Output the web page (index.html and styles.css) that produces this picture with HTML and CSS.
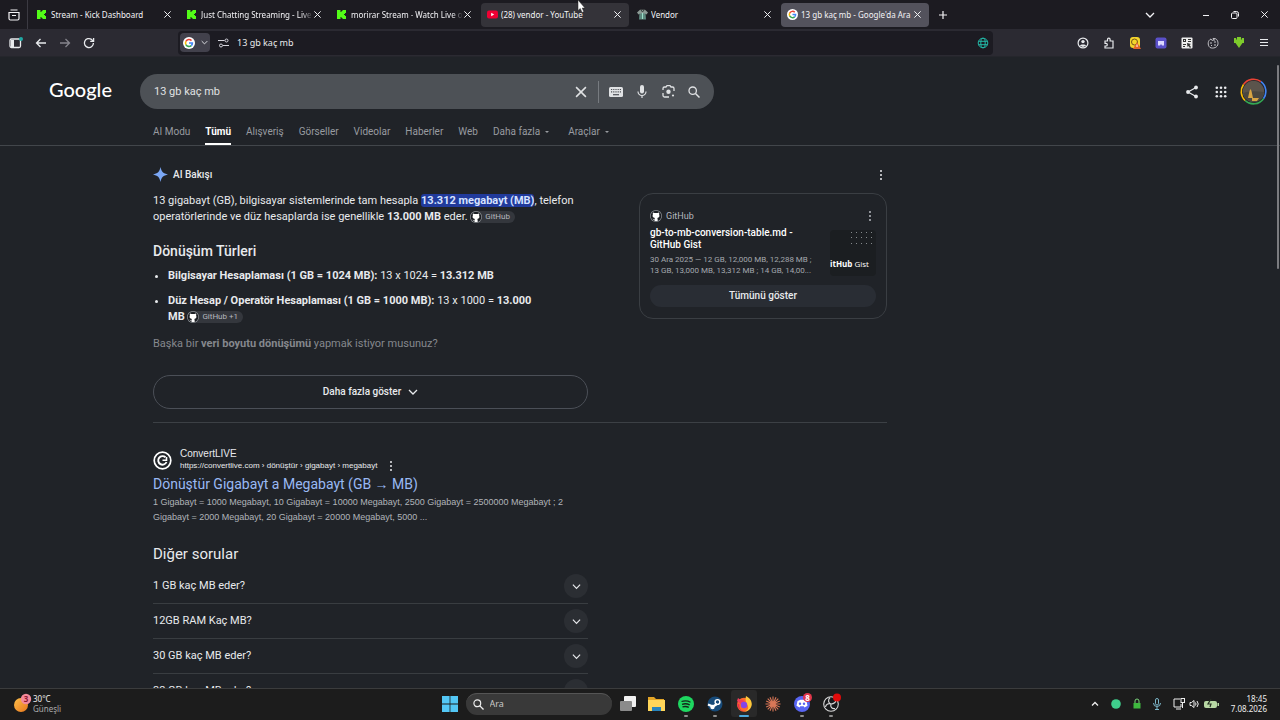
FILE: index.html
```html
<!DOCTYPE html>
<html lang="tr">
<head>
<meta charset="utf-8">
<title>13 gb kaç mb - Google'da Ara</title>
<link rel="stylesheet" href="styles.css">
</head>
<body>
<svg class="defs" aria-hidden="true">
  <symbol id="x" viewBox="0 0 10 10"><path d="M1.5 1.5l7 7M8.5 1.5l-7 7" fill="none" stroke="currentColor" stroke-width="1.1"/></symbol>
  <symbol id="chev" viewBox="0 0 10 10"><path d="M1 3l4 4 4-4" fill="none" stroke="currentColor" stroke-width="1.3"/></symbol>
  <symbol id="dots" viewBox="0 0 4 12"><circle cx="2" cy="2" r="1"/><circle cx="2" cy="6" r="1"/><circle cx="2" cy="10" r="1"/></symbol>
  <symbol id="kick" viewBox="0 0 9 9"><path fill="#53fc18" d="M0 0h3.500v2h1V1h1V0H9v3H8v1H7v1h1v1h1v3H5.500V8h-1V7h-1v2H0z"/></symbol>
  <symbol id="goog" viewBox="0 0 12 12"><circle cx="6" cy="6" r="6" fill="#fff"/><g fill="none" stroke-width="1.6"><path stroke="#ea4335" d="M8.5 3.6A3.5 3.5 0 0 0 2.9 4.4"/><path stroke="#fbbc05" d="M2.9 4.4a3.5 3.5 0 0 0 0 3.2"/><path stroke="#34a853" d="M2.9 7.6a3.5 3.5 0 0 0 5.4 1"/><path stroke="#4285f4" d="M8.3 8.6A3.4 3.4 0 0 0 9.4 6H6"/></g></symbol>
  <symbol id="gh" viewBox="0 0 12 12"><circle cx="6" cy="6" r="6" fill="#8d9196"/><circle cx="6" cy="6" r="5.300" fill="#1c1f24"/><path fill="#fff" d="M3 2.400l1.500.7a6 6 0 0 1 3 0L9 2.400c.4 1 .3 1.500.1 1.800C10 6.600 9 7.700 7.300 7.900c.4.5.4 1.200.4 3.100H4.500V9.800C3.300 10 3 9.200 2.500 8.800c.8 0 1 .8 2 .7 0-.8.1-1.200.4-1.600C3 7.700 2 6.600 2.900 4.200 2.700 3.600 2.700 3 3 2.400z"/></symbol>
  <symbol id="search" viewBox="0 0 12 12"><circle cx="4.700" cy="4.700" r="3.700" fill="none" stroke="currentColor" stroke-width="1.300"/><path d="M7.500 7.500l4 4" stroke="currentColor" stroke-width="1.500"/></symbol>
</svg>

<header class="tabs">
  <button class="view" aria-label="Sekme görünümü"><svg width="12" height="12" viewBox="0 0 12 12" fill="none" stroke="currentColor" stroke-width="1.2"><path d="M2.500 1h7M1 3.500h10v6a1.500 1.500 0 0 1-1.500 1.500h-7A1.500 1.500 0 0 1 1 9.500zM4 6.500h4"/></svg></button>
  <div class="tab"><svg class="fav"><use href="#kick"/></svg><span class="title">Stream - Kick Dashboard</span><button class="close" aria-label="Kapat"><svg><use href="#x"/></svg></button></div>
  <div class="tab"><svg class="fav"><use href="#kick"/></svg><span class="title fade">Just Chatting Streaming - Live S</span><button class="close" aria-label="Kapat"><svg><use href="#x"/></svg></button></div>
  <div class="tab"><svg class="fav"><use href="#kick"/></svg><span class="title fade">morirar Stream - Watch Live on</span><button class="close" aria-label="Kapat"><svg><use href="#x"/></svg></button></div>
  <div class="tab hover"><svg class="fav big" viewBox="0 0 11 11"><rect y="1.500" width="11" height="8" rx="2" fill="#f00033"/><path d="M4.200 3.700v3.600l3-1.800z" fill="#fff"/></svg><span class="title">(28) vendor - YouTube</span><button class="close" aria-label="Kapat"><svg><use href="#x"/></svg></button></div>
  <div class="tab"><svg class="fav big" viewBox="0 0 11 11"><path fill="#5d8a7f" d="M2.500 3h6l.5 7.500H2z"/><path fill="#8c9a95" d="M3 .8h5l3 2.700-1.500 2L8 4.500H3l-1.500 1L0 3.500z"/><path d="M4 1l1.500 2L7 1" fill="none" stroke="#33403c"/><path d="M5.500 4v6" stroke="#9bdfca"/></svg><span class="title">Vendor</span><button class="close" aria-label="Kapat"><svg><use href="#x"/></svg></button></div>
  <div class="tab active"><svg class="fav big"><use href="#goog"/></svg><span class="title">13 gb kaç mb - Google'da Ara</span><button class="close" aria-label="Kapat"><svg><use href="#x"/></svg></button></div>
  <button class="plus" aria-label="Yeni sekme"><svg width="10" height="10" viewBox="0 0 10 10" stroke="currentColor" stroke-width="1.200"><path d="M5 1v8M1 5h8"/></svg></button>
  <div class="win">
    <button aria-label="Sekmeler"><svg width="10" height="10"><use href="#chev"/></svg></button>
    <button class="min" aria-label="Küçült"><svg width="8" height="8" viewBox="0 0 8 8" stroke="currentColor"><path d="M1 4.500h6"/></svg></button>
    <button aria-label="Geri yükle"><svg width="8" height="8" viewBox="0 0 8 8" fill="none" stroke="currentColor"><rect x=".5" y="2" width="5.500" height="5.500" rx="1"/><path d="M2.500.5h3a2 2 0 0 1 2 2v3"/></svg></button>
    <button aria-label="Kapat"><svg width="9" height="9"><use href="#x"/></svg></button>
  </div>
</header>

<div class="toolbar">
  <div class="navbtns">
    <button aria-label="Kenar çubuğu"><svg width="14" height="12" viewBox="0 0 14 12"><rect x="1" y="2" width="10.500" height="8.500" rx="1.500" fill="none" stroke="currentColor" stroke-width="1.300"/><path d="M2 3h3v7H2z" fill="currentColor"/><circle cx="12" cy="2" r="2" fill="#1fa9a5"/></svg></button>
    <button aria-label="Geri"><svg width="12" height="12" viewBox="0 0 12 12" fill="none" stroke="currentColor" stroke-width="1.300"><path d="M11 6H1.500M5.500 2l-4 4 4 4"/></svg></button>
    <button class="dim" aria-label="İleri"><svg width="12" height="12" viewBox="0 0 12 12" fill="none" stroke="currentColor" stroke-width="1.300"><path d="M1 6h9.500M6.500 2l4 4-4 4"/></svg></button>
    <button aria-label="Yenile"><svg width="12" height="12" viewBox="0 0 12 12" fill="none" stroke="currentColor" stroke-width="1.300"><path d="M10.400 6A4.500 4.500 0 1 1 8.500 2.400L10 4M10.600 1v3.400H7.200"/></svg></button>
  </div>
  <div class="url">
    <button class="engine" aria-label="Arama motoru"><svg width="12" height="12"><use href="#goog"/></svg><svg width="7" height="7"><use href="#chev"/></svg></button>
    <svg width="11" height="10" viewBox="0 0 11 10" fill="none" stroke="#d5d4dc"><path d="M0 2.500h6.500M5 7.500H11"/><circle cx="8.500" cy="2.500" r="1.500"/><circle cx="3" cy="7.500" r="1.500"/></svg>
    <input type="text" value="13 gb kaç mb" aria-label="Adres">
    <svg width="12" height="12" viewBox="0 0 12 12" fill="none" stroke="#23b9a8"><circle cx="6" cy="6" r="4.800"/><ellipse cx="6" cy="6" rx="2.200" ry="4.800"/><path d="M1.500 4.300h9M1.500 7.700h9"/></svg>
  </div>
  <div class="exts">
    <button aria-label="Hesap"><svg width="12" height="12" viewBox="0 0 12 12"><circle cx="6" cy="6" r="4.900" fill="none" stroke="currentColor" stroke-width="1.200"/><circle cx="6" cy="4.600" r="1.700" fill="currentColor"/><path d="M3 8.800C3 7 9 7 9 8.800L6 10z" fill="currentColor"/></svg></button>
    <button aria-label="Uzantılar"><svg width="12" height="12" viewBox="0 0 12 12" fill="none" stroke="currentColor" stroke-width="1.200"><path d="M2 4h2.500V2.500a1.300 1.300 0 0 1 2.600 0V4H10v7H2V9h1a1.300 1.300 0 0 0 0-2.600H2z"/></svg></button>
    <button aria-label="Uzantı 1"><svg width="12" height="12" viewBox="0 0 12 12"><rect x="1" width="10" height="11" rx="3" fill="#f4d52c"/><circle cx="5.500" cy="5" r="3" fill="none" stroke="#72541c"/><path d="M8 5l4 7H4z" fill="#e3642a"/><path d="M8 7.500v2.500" stroke="#fff"/></svg></button>
    <button aria-label="Uzantı 2"><svg width="12" height="12" viewBox="0 0 12 12"><rect x=".5" y=".5" width="11" height="11" rx="2" fill="#5a50c8"/><path d="M3 4h6v4.500H7L6 7 5 8.500H3z" fill="#dcd9ff"/></svg></button>
    <button aria-label="Uzantı 3"><svg width="12" height="12" viewBox="0 0 12 12"><rect x=".5" y=".5" width="11" height="11" rx="1" fill="#eee"/><path d="M2 2h3v3H2zM7 2h3v1H7zM7 4h3v1H7zM2 7h3v1H2zM2 9h2v1H2zM6 6l4 1-1.500 1L10 10 9 11 7.500 9 6.500 10z" fill="#333"/><path d="M3 3h1v1H3z" fill="#eee"/></svg></button>
    <button aria-label="Uzantı 4"><svg width="12" height="12" viewBox="0 0 12 12" fill="none" stroke="#c4c3c8"><path d="M4 2C1 3 0 8 3 10.500c3 1.500 8 0 8-4C11 3 9 1 6 1.500c1 1 0 2-1 2z"/><path d="M3 6h2M7 5h2M4 8.500h1M7 8h2M6 3h2"/></svg></button>
    <button aria-label="İndir"><svg width="12" height="12" viewBox="0 0 12 12" fill="#7ecb2c"><path d="M1 1h2.200v1.500H4V0h4v2.500h.8V1H11v5H9.500L6 11 2.500 6H1z"/></svg></button>
    <button aria-label="Menü"><svg width="10" height="10" viewBox="0 0 10 10" stroke="currentColor"><path d="M1 1.500h8M1 4.500h8M1 7.500h8"/></svg></button>
  </div>
</div>

<main class="page">
  <div class="top">
    <a class="logo" href="#">Google</a>
    <form class="box">
      <input type="text" value="13 gb kaç mb" aria-label="Ara">
      <button type="button" aria-label="Temizle"><svg width="14" height="14"><use href="#x"/></svg></button>
      <span class="sep"></span>
      <button type="button" aria-label="Klavye"><svg width="14" height="12" viewBox="0 0 14 12"><rect y="1" width="14" height="10" rx="1.500" fill="currentColor"/><path d="M2 3.500h10M2 5.800h10" stroke="#4d5156" stroke-width="1.200" stroke-dasharray="1.200 1"/><path d="M4 8.700h6" stroke="#4d5156" stroke-width="1.200"/></svg></button>
      <button type="button" aria-label="Sesle ara"><svg width="10" height="14" viewBox="0 0 10 14"><rect x="3" y="0" width="4" height="8.500" rx="2" fill="currentColor"/><path d="M1 6.500a4 4 0 0 0 8 0M5 10.500V13" fill="none" stroke="currentColor" stroke-width="1.200"/></svg></button>
      <button type="button" aria-label="Görselle ara"><svg width="13" height="13" viewBox="0 0 13 13"><path d="M1 5V3.500A1.500 1.500 0 0 1 2.500 2H4l1-1.300h3L9 2h1.500A1.500 1.500 0 0 1 12 3.500V6M1 8v2.500A1.500 1.500 0 0 0 2.500 12H7" fill="none" stroke="currentColor" stroke-width="1.300"/><circle cx="6.500" cy="6.800" r="2.200" fill="currentColor"/><circle cx="11" cy="10.500" r="1.100" fill="currentColor"/></svg></button>
      <button type="submit" aria-label="Ara"><svg width="12" height="12"><use href="#search"/></svg></button>
    </form>
    <div class="account">
      <button aria-label="Paylaş"><svg width="12" height="14" viewBox="0 0 12 14" fill="currentColor"><path d="M10 2.500L2 7l8 4.500" fill="none" stroke="currentColor" stroke-width="1.200"/><circle cx="10" cy="2.500" r="1.900"/><circle cx="2" cy="7" r="1.900"/><circle cx="10" cy="11.500" r="1.900"/></svg></button>
      <button aria-label="Uygulamalar"><svg width="12" height="12" viewBox="0 0 12 12" fill="currentColor"><g id="r"><circle cx="1.800" cy="1.800" r="1.300"/><circle cx="6" cy="1.800" r="1.300"/><circle cx="10.200" cy="1.800" r="1.300"/></g><use href="#r" y="4.200"/><use href="#r" y="8.400"/></svg></button>
      <button aria-label="Hesabım"><svg width="27" height="27" viewBox="0 0 27 27"><g fill="none" stroke-width="1.600"><path stroke="#ea4335" d="M3.500 6.500A12.300 12.300 0 0 1 21 3.700"/><path stroke="#4285f4" d="M21 3.700a12.300 12.300 0 0 1 2.500 17"/><path stroke="#34a853" d="M23.500 20.700A12.300 12.300 0 0 1 5 22.500"/><path stroke="#fbbc05" d="M5 22.500a12.300 12.300 0 0 1-1.500-16"/></g><circle cx="13.500" cy="13.500" r="10.700" fill="#5b544c"/><path d="M3 15q7-3 21-1-1 9-10 10.200Q5 23 3 15z" fill="#4b4740"/><path d="M8 20l1.500-7 1-2 1 2 1.500 7zM12 20h7l-2 3h-5z" fill="#d8a443"/></svg></button>
    </div>
  </div>
  <nav class="filters">
    <a href="#">AI Modu</a><a href="#" class="on">Tümü</a><a href="#">Alışveriş</a><a href="#">Görseller</a><a href="#">Videolar</a><a href="#">Haberler</a><a href="#">Web</a><button class="more">Daha fazla <i></i></button><button class="more">Araçlar <i></i></button>
  </nav>

  <div class="results">
    <section class="overview">
      <div class="ai">
        <svg width="15" height="15" viewBox="0 0 14 14"><path fill="#7ba7f5" d="M7 0c.8 4.300 2.700 6.200 7 7-4.300.8-6.200 2.700-7 7-.8-4.300-2.700-6.200-7-7 4.300-.8 6.200-2.700 7-7z"/></svg>
        <h2>AI Bakışı</h2>
        <button aria-label="Seçenekler"><svg width="4" height="12" fill="currentColor"><use href="#dots"/></svg></button>
      </div>
      <div class="cols">
        <div class="answer">
          <p>13 gigabayt (GB), bilgisayar sistemlerinde tam hesapla <mark>13.312 megabayt (MB)</mark>, telefon<br>operatörlerinde ve düz hesaplarda ise genellikle <b>13.000 MB</b> eder. <a class="chip" href="#"><svg width="12" height="12"><use href="#gh"/></svg>GitHub</a></p>
          <h3>Dönüşüm Türleri</h3>
          <ul>
            <li><b>Bilgisayar Hesaplaması (1 GB = 1024 MB):</b> 13 x 1024 = <b>13.312 MB</b></li>
            <li><b>Düz Hesap / Operatör Hesaplaması (1 GB = 1000 MB):</b> 13 x 1000 = <b>13.000<br>MB</b> <a class="chip" href="#"><svg width="12" height="12"><use href="#gh"/></svg>GitHub +1</a></li>
          </ul>
          <p class="ask">Başka bir <b>veri boyutu dönüşümü</b> yapmak istiyor musunuz?</p>
          <button class="showmore">Daha fazla göster <svg width="10" height="10"><use href="#chev"/></svg></button>
        </div>
        <aside class="card">
          <div class="src"><svg width="12" height="12"><use href="#gh"/></svg><span>GitHub</span><button aria-label="Seçenekler"><svg width="4" height="12" fill="currentColor"><use href="#dots"/></svg></button></div>
          <div class="cardbody">
            <div class="cardtext">
              <h4>gb-to-mb-conversion-table.md -<br>GitHub Gist</h4>
              <p>30 Ara 2025 — 12 GB, 12,000 MB, 12,288 MB ;<br>13 GB, 13,000 MB, 13,312 MB ; 14 GB, 14,00...</p>
            </div>
            <div class="thumb"><svg width="26" height="16" viewBox="0 0 26 16" stroke="#85898c" stroke-dasharray="1 4"><path d="M1 1.500h24M1 6.500h24M1 12.500h24"/></svg><span><b>itHub</b> Gist</span></div>
          </div>
          <button class="all">Tümünü göster</button>
        </aside>
      </div>
    </section>

    <article class="hit">
      <div class="site">
        <svg width="19" height="19" viewBox="0 0 19 19" fill="none" stroke="#fff"><circle cx="9.500" cy="9.500" r="8.300" stroke-width="1.700"/><path d="M12.500 6.300A4.300 4.300 0 1 0 13.500 11" stroke-width="1.900"/><path d="M13.500 6v3.200H9.500" stroke-width="1.600"/></svg>
        <div class="sitetext"><span class="name">ConvertLIVE</span><span class="crumb">https://convertlive.com › dönüştür › gigabayt › megabayt <button aria-label="Seçenekler"><svg width="4" height="12" fill="currentColor"><use href="#dots"/></svg></button></span></div>
      </div>
      <h3><a href="#">Dönüştür Gigabayt a Megabayt (GB → MB)</a></h3>
      <p>1 Gigabayt = 1000 Megabayt, 10 Gigabayt = 10000 Megabayt, 2500 Gigabayt = 2500000 Megabayt ; 2<br>Gigabayt = 2000 Megabayt, 20 Gigabayt = 20000 Megabayt, 5000 ...</p>
    </article>

    <section class="faq">
      <h2>Diğer sorular</h2>
      <div class="q"><span>1 GB kaç MB eder?</span><button aria-label="Genişlet"><svg width="9" height="9"><use href="#chev"/></svg></button></div>
      <div class="q"><span>12GB RAM Kaç MB?</span><button aria-label="Genişlet"><svg width="9" height="9"><use href="#chev"/></svg></button></div>
      <div class="q"><span>30 GB kaç MB eder?</span><button aria-label="Genişlet"><svg width="9" height="9"><use href="#chev"/></svg></button></div>
      <div class="q"><span>32 GB kaç MB eder?</span><button aria-label="Genişlet"><svg width="9" height="9"><use href="#chev"/></svg></button></div>
    </section>
  </div>
  <div class="scroll"></div>
</main>

<footer class="taskbar">
  <div class="weather">
    <svg width="19" height="21" viewBox="0 0 19 21"><defs><linearGradient id="sun" x1="0" y1="0" x2="1" y2="1"><stop offset="0" stop-color="#ffc04a"/><stop offset="1" stop-color="#e8761c"/></linearGradient></defs><circle cx="7" cy="12" r="7" fill="url(#sun)"/><circle cx="12" cy="6" r="5.200" fill="#f48a9a"/><text x="12" y="9" text-anchor="middle" class="badge dark">3</text></svg>
    <div><span>30°C</span><span class="sub">Güneşli</span></div>
  </div>
  <div class="apps">
    <button aria-label="Başlat"><svg width="16" height="16" viewBox="0 0 16 16"><path fill="#53c7f5" d="M0 0h7.600v7.600H0zM8.400 0H16v7.600H8.400zM0 8.400h7.600V16H0zM8.400 8.400H16V16H8.400z"/></svg></button>
    <label class="find"><svg width="11" height="11"><use href="#search"/></svg><input type="text" placeholder="Ara" aria-label="Ara"></label>
    <button aria-label="Görev görünümü"><svg width="16" height="16" viewBox="0 0 16 16"><rect x="4" y="0" width="12" height="11" rx="1" fill="#f2f2f2"/><rect x="0" y="5" width="12" height="10" rx="1" fill="#8b8b8b"/></svg></button>
    <button aria-label="Dosya Gezgini"><svg width="17" height="16" viewBox="0 0 17 16"><path fill="#e3a527" d="M0 1h6l2 2h8v6H0z"/><path fill="#ffd659" d="M0 4h17v11H0z"/><path fill="#2784bd" d="M4 15v-4h9v4z"/></svg></button>
    <button class="run" aria-label="Spotify"><svg width="16" height="16" viewBox="0 0 16 16"><circle cx="8" cy="8" r="8" fill="#1ed760"/><path d="M3.500 5.500q5-1.500 9 .8M4 8.300q4.200-1.300 7.700.6M4.500 10.900q3.500-1 6.300.5" fill="none" stroke="#15251a" stroke-width="1.300"/></svg></button>
    <button class="run" aria-label="Steam"><svg width="16" height="16" viewBox="0 0 16 16"><circle cx="8" cy="8" r="7.500" fill="#174a78"/><circle cx="10.500" cy="6" r="2.400" fill="none" stroke="#fff" stroke-width="1.400"/><path d="M1 8.500l5 2 4-2.500" fill="none" stroke="#fff" stroke-width="2.300"/><circle cx="5.500" cy="11" r="2.200" fill="#fff"/></svg></button>
    <button class="run sel" aria-label="Firefox"><svg width="16" height="16" viewBox="0 0 16 16"><circle cx="8" cy="8.700" r="7" fill="#ff6b2b"/><path d="M10 0c4 2 7 6 5.300 10.500C14 14 11 16 8 15.700c4-1 5-4 3.500-6.700C10 7 9 4 10 0z" fill="#ffc83a"/><path d="M1 5l1-3 2.500 2C7 3 8 5 9 6c-3 0-4 1-4 2.500z" fill="#f43d5a"/><circle cx="8" cy="9" r="3.200" fill="#8544e8"/><path d="M1.200 7C1 12 5 16 9 15.500c-5-1-6-4-5.500-7z" fill="#e8314d"/></svg></button>
    <button aria-label="Claude"><svg width="16" height="16" viewBox="0 0 16 16" stroke="#d97757" stroke-width="1.100"><path d="M8 .5v15M.5 8h15M2.700 2.700l10.600 10.600M13.300 2.700L2.700 13.300M5 1.200l6 13.600M11 1.200L5 14.800M1.200 5l13.600 6M14.800 5L1.200 11"/></svg></button>
    <button class="run" aria-label="Discord"><svg width="20" height="24" viewBox="-2 0 20 24"><circle cx="8" cy="12" r="8" fill="#5865f2"/><path d="M3.500 9l3-1.300h3l3 1.300 1 4.800-3 1.700-.8-1.200H6.300L5.500 15.500l-3-1.700z" fill="#fff"/><circle cx="6" cy="11.700" r="1.200" fill="#5865f2"/><circle cx="10" cy="11.700" r="1.200" fill="#5865f2"/><circle cx="13.500" cy="5.500" r="4.500" fill="#e2374b"/><text x="13.500" y="8.500" text-anchor="middle" class="badge">8</text></svg></button>
    <button class="run" aria-label="OBS"><svg width="20" height="24" viewBox="-2 0 20 24"><circle cx="8" cy="12" r="7.300" fill="#18191b" stroke="#d8d8d8" stroke-width="1.100"/><path d="M7 5.500c-3 3-1 6 1 6.500 3 0 5-2 5-4M8 12c-1 3 1 5 4 4.500M8 12c-2-1-5 0-5.500 3" fill="none" stroke="#d8d8d8" stroke-width="1.200"/><circle cx="14" cy="5.500" r="4" fill="#e00b0b"/></svg></button>
  </div>
  <div class="tray">
    <svg width="8" height="8" viewBox="0 0 8 8" fill="none" stroke="#eee" stroke-width="1.300"><path d="M1 5.500l3-3 3 3"/></svg>
    <svg width="10" height="10" viewBox="0 0 10 10"><circle cx="5" cy="5" r="4.800" fill="#3fce8c"/></svg>
    <svg width="8" height="11" viewBox="0 0 8 11"><path d="M2 5V3a2 2 0 0 1 4 0v2" fill="none" stroke="#7bd37b"/><rect x=".5" y="5" width="7" height="5.500" fill="#3fb83f"/></svg>
    <svg width="8" height="12" viewBox="0 0 8 12" fill="none" stroke="#7db7ca"><rect x="2.500" y=".5" width="3" height="6.500" rx="1.500"/><path d="M.5 5a3.500 3.500 0 0 0 7 0M4 8.500V11.500M2 11.500h4"/></svg>
    <div class="status">
      <svg width="12" height="12" viewBox="0 0 12 12" fill="none" stroke="#eee"><path d="M7 1H1v8h7V6M3 11h5M9.500 4v6"/><rect x="8" y=".5" width="3.500" height="4"/></svg>
      <svg width="11" height="10" viewBox="0 0 11 10" fill="none" stroke="#eee"><path d="M1 3.500h1.500L5 1.500v7L2.500 6.500H1zM6.500 3.500q1 1.500 0 3M8 2q2.500 3 0 6"/></svg>
      <svg width="15" height="10" viewBox="0 0 15 10"><rect y="2" width="13" height="7" rx="2" fill="#b8d8a4"/><path d="M13.500 4h1.500v3h-1.500z" fill="#b8d8a4"/><path d="M7 0L4 5h3L6 8" fill="none" stroke="#253022" stroke-width="1.200"/></svg>
    </div>
    <div class="clock"><span>18:45</span><span>7.08.2026</span></div>
  </div>
</footer>
<svg class="cursor" viewBox="0 0 9 13"><path d="M1 0v10.500l2.300-2 1.700 4 1.800-.8L5.200 8H8z" fill="#fff" stroke="#222" stroke-width=".5"/></svg>
</body>
</html>
```
FILE: styles.css
```css
* { box-sizing: border-box; }
body { margin: 0; height: 100vh; display: flex; flex-direction: column; overflow: hidden; background: #202328; color: #e8eaed; font: 11px/16px Roboto, "Liberation Sans", sans-serif; }
button { background: none; border: 0; padding: 0; margin: 0; color: inherit; font: inherit; display: inline-flex; align-items: center; justify-content: center; flex: none; }
input { background: none; border: 0; padding: 0; outline: 0; color: inherit; font: inherit; min-width: 0; flex: 1; }
a { color: inherit; text-decoration: none; }
h2, h3, h4, p, ul { margin: 0; font-weight: 400; }
svg { flex: none; display: block; }
b { font-weight: 700; }
.defs { position: absolute; width: 0; height: 0; }

.tabs { height: 29px; flex: none; display: flex; align-items: center; background: #1c1b21; font: 8px/14px "Noto Sans", sans-serif; color: #f3f3f6; }
.view { width: 28px; height: 29px; border-right: 1px solid #3b3a42; margin-right: 3px; }
.tab { width: 148px; height: 24px; margin-right: 2px; padding: 0 7px 0 6px; display: flex; align-items: center; border-radius: 4px; }
.tab.hover { background: #343339; }
.tab.active { background: #53525c; }
.fav { width: 9px; height: 9px; margin-right: 5px; }
.fav.big { width: 11px; height: 11px; margin-right: 3px; }
.title { flex: 1; min-width: 0; overflow: hidden; white-space: nowrap; }
.title.fade { mask-image: linear-gradient(to right, #000 90%, transparent); }
.close { width: 9px; }
.close svg { width: 9px; height: 9px; }
.plus { width: 24px; height: 24px; }
.win { margin-left: auto; display: flex; gap: 21px; padding-right: 11px; }
.min { margin-left: 26px; }

.toolbar { height: 28px; flex: none; display: flex; align-items: center; background: #2b2a32; border-bottom: 1px solid #25262c; padding-left: 9px; }
.navbtns { display: flex; gap: 12px; width: 169px; }
.navbtns .dim { color: #85848c; }
.url { flex: 1; height: 24px; display: flex; align-items: center; background: #1c1b22; border-radius: 4px; padding: 0 4px 0 2px; font: 9px/14px "Noto Sans", sans-serif; }
.engine { width: 30px; height: 19px; gap: 6px; background: #42414c; border-radius: 4px; margin-right: 8px; }
.url input { margin-left: 8px; }
.exts { display: flex; justify-content: space-between; width: 192px; margin-left: 84px; margin-right: 11px; }

.page { flex: 1; min-height: 0; position: relative; overflow: hidden; }
.top { display: flex; align-items: center; padding: 17px 13px 0 49px; }
.logo { width: 91px; padding-bottom: 5px; font: 500 20px/24px Lato, sans-serif; color: #fff; }
.box { width: 574px; height: 35px; border-radius: 18px; background: #4d5156; display: flex; align-items: center; padding: 0 13px 0 14px; gap: 12px; color: #e0e2e4; }
.box button { width: 14px; }
.sep { width: 1px; height: 22px; background: #777b80; margin: 0 -2px; }
.account { margin-left: auto; display: flex; align-items: center; gap: 17px; }
.account button:last-child { margin-left: -4px; }
.filters { display: flex; align-items: stretch; gap: 15px; height: 37px; padding-left: 153px; border-bottom: 1px solid #42464b; color: #989ba0; font-size: 10px; line-height: 16px; }
.filters a, .filters .more { padding-top: 15px; align-items: flex-start; }
.filters .on { color: #fff; font-weight: 700; border-bottom: 2px solid #fff; }
.more i { border: 2px solid transparent; border-top-color: currentColor; margin: 7px 4px 0 5px; }

.results { width: 734px; margin-left: 153px; }
.overview { border-bottom: 1px solid #3c4045; padding: 20px 0 13px; }
.ai { display: flex; align-items: center; gap: 5px; height: 17px; }
.ai h2 { font-size: 10px; font-weight: 500; }
.ai button { margin-left: auto; margin-right: 4px; }
.cols { display: grid; grid-template-columns: 435px 248px; justify-content: space-between; align-items: start; padding-top: 10px; }
.answer { white-space: nowrap; }
mark { background: #213a9b; color: #d6e2ff; font-weight: 700; border-radius: 3px; }
.chip { display: inline-flex; align-items: center; gap: 3px; height: 12px; padding-right: 5px; border-radius: 6px; background: #34373d; color: #b4b8be; font-size: 8px; line-height: 12px; vertical-align: -3px; }
.answer h3 { font-size: 14px; line-height: 20px; font-weight: 500; margin: 16px 0 7px; }
.answer ul { padding-left: 15px; display: grid; gap: 9px; }
.answer .ask { color: #85888d; margin-top: 11px; }
.showmore { width: 100%; height: 34px; margin-top: 23px; border: 1px solid #4b4f57; border-radius: 17px; gap: 7px; font-size: 10px; font-weight: 500; }
.card { border: 1px solid #3a3e43; border-radius: 14px; padding: 14px 10px 11px; }
.src { display: flex; align-items: center; gap: 4px; color: #b4b8be; font-size: 9px; }
.src button { margin-left: auto; margin-right: 4px; }
.cardbody { display: flex; justify-content: space-between; margin-top: 3px; white-space: nowrap; }
.card h4 { font-size: 10px; line-height: 12px; font-weight: 500; color: #fff; }
.card p { font-size: 8px; line-height: 11px; color: #a4a8ad; margin-top: 3px; }
.thumb { width: 46px; height: 46px; margin-top: 3px; background: #1b1e21; border-radius: 4px; display: flex; flex-direction: column; align-items: flex-end; justify-content: space-between; overflow: hidden; font: 8px/12px "Open Sans", sans-serif; color: #fff; padding: 1px 0 6px; }
.thumb span { width: 46px; }
.all { width: 100%; height: 22px; margin-top: 9px; background: #292d34; border-radius: 11px; font-size: 10px; font-weight: 500; }

.hit { padding-top: 25px; white-space: nowrap; }
.site { display: flex; align-items: center; gap: 8px; }
.sitetext { display: flex; flex-direction: column; }
.name { font: 10px/12px "Liberation Sans", sans-serif; }
.crumb { display: flex; align-items: center; font: 8px/12px "Liberation Sans", sans-serif; }
.crumb button { margin-left: 12px; }
.hit h3 { font-size: 14px; line-height: 20px; color: #99b9f4; margin-top: 2px; }
.hit p { font: 9px/15px "Liberation Sans", sans-serif; color: #b0b4b9; margin-top: 1px; }
.faq { width: 435px; padding-top: 19px; }
.faq h2 { font-size: 15px; line-height: 20px; margin-bottom: 5px; }
.q { display: flex; align-items: center; justify-content: space-between; height: 35px; border-bottom: 1px solid #393d41; }
.q button { width: 24px; height: 24px; border-radius: 12px; background: #2b2e33; }
.scroll { position: absolute; right: 1px; top: 8px; width: 2px; height: 204px; border-radius: 1px; background: #7b7c80; }

.taskbar { height: 32px; flex: none; border-top: 1px solid #3b3c3d; padding-bottom: 2px; background: #1c1c1c; display: grid; grid-template-columns: 1fr auto 1fr; align-items: center; font: 8px/10px "Noto Sans", sans-serif; color: #eee; }
.weather { display: flex; align-items: center; padding-left: 14px; }
.weather div, .clock { display: flex; flex-direction: column; }
.weather .sub { color: #aaa; }
.badge { font: 700 8px "Noto Sans", sans-serif; fill: #fff; }
.badge.dark { fill: #8f1830; }
.apps { display: flex; align-items: center; gap: 3px; }
.apps button { width: 26px; height: 27px; border-radius: 3px; position: relative; }
.apps .sel { background: #292929; }
.run::after { content: ""; position: absolute; bottom: 0; left: 11px; width: 4px; height: 2px; border-radius: 1px; background: #8e8e8e; }
.run.sel::after { left: 8px; width: 10px; background: #4ca9dd; }
.find { display: flex; align-items: center; gap: 6px; width: 146px; height: 22px; padding: 0 7px; border-radius: 11px; border-top: 1px solid #555; background: #393939; font-size: 9px; }
.find input::placeholder { color: #c8c8c8; opacity: 1; }
.tray { justify-self: end; display: flex; align-items: center; gap: 12px; padding-right: 13px; }
.status { display: flex; align-items: center; gap: 4px; }
.clock { text-align: right; }
.cursor { position: absolute; left: 577px; top: 0; width: 9px; height: 13px; }
```
